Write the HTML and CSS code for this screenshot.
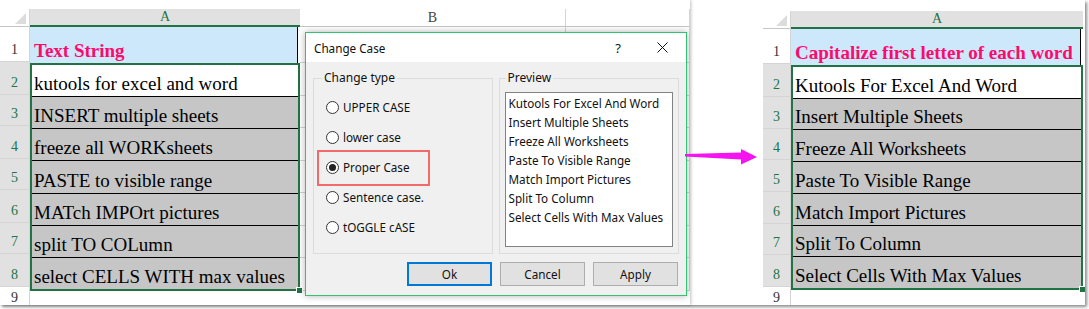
FILE: index.html
```html
<!DOCTYPE html>
<html>
<head lang="en">
    <meta charset="UTF-8">
    <title>Change Case</title>
    <link rel="stylesheet" href="styles.css">
</head>
<body>
<div class="page">
    <!-- before: original values + dialog -->
    <div class="shot shot-left">
        <div class="heads">
            <div class="corner"><span class="tri"></span></div>
            <div class="rh h36">1</div>
            <div class="rh on h33">2</div>
            <div class="rh on h32">3</div>
            <div class="rh on h33">4</div>
            <div class="rh on h32">5</div>
            <div class="rh on h33">6</div>
            <div class="rh on h32">7</div>
            <div class="rh on h33">8</div>
            <div class="rh last">9</div>
        </div>
        <div class="col col-a">
            <div class="ch on">A</div>
            <div class="cell cell-title">Text String</div>
            <div class="sel">
                <div class="cell cur">kutools for excel and word</div>
                <div class="cell">INSERT multiple sheets</div>
                <div class="cell">freeze all WORKsheets</div>
                <div class="cell">PASTE to visible range</div>
                <div class="cell">MATch IMPOrt pictures</div>
                <div class="cell">split TO COLumn</div>
                <div class="cell">select CELLS WITH max values</div>
                <span class="handle"></span>
            </div>
            <div class="cell blank"></div>
        </div>
        <div class="col col-b">
            <div class="ch">B</div>
            <div class="gc h36"></div>
            <div class="gc h33"></div>
            <div class="gc h32"></div>
            <div class="gc h33"></div>
            <div class="gc h32"></div>
            <div class="gc h33"></div>
            <div class="gc h32"></div>
            <div class="gc h33"></div>
        </div>
        <div class="col col-c">
            <div class="ch"></div>
            <div class="gc h36"></div>
            <div class="gc h33"></div>
            <div class="gc h32"></div>
            <div class="gc h33"></div>
            <div class="gc h32"></div>
            <div class="gc h33"></div>
            <div class="gc h32"></div>
            <div class="gc h33"></div>
        </div>

        <div class="dialog">
            <div class="dlg-title">
                <span class="dlg-name">Change Case</span>
                <span class="dlg-help">?</span>
                <svg class="dlg-close" width="11" height="11" viewBox="0 0 11 11">
                    <path d="M0.5 0.5 L10.5 10.5 M10.5 0.5 L0.5 10.5" stroke="#111" stroke-width="1" fill="none"/>
                </svg>
            </div>
            <div class="dlg-body">
                <div class="groups">
                    <fieldset class="grp grp-type">
                        <legend>Change type</legend>
                        <ul class="opts">
                            <li><span class="radio"></span>UPPER CASE</li>
                            <li><span class="radio"></span>lower case</li>
                            <li class="on"><span class="radio checked"></span>Proper Case</li>
                            <li><span class="radio"></span>Sentence case.</li>
                            <li><span class="radio"></span>tOGGLE cASE</li>
                        </ul>
                    </fieldset>
                    <fieldset class="grp grp-preview">
                        <legend>Preview</legend>
                        <ul class="preview">
                            <li>Kutools For Excel And Word</li>
                            <li>Insert Multiple Sheets</li>
                            <li>Freeze All Worksheets</li>
                            <li>Paste To Visible Range</li>
                            <li>Match Import Pictures</li>
                            <li>Split To Column</li>
                            <li>Select Cells With Max Values</li>
                        </ul>
                    </fieldset>
                </div>
                <div class="buttons">
                    <a class="btn btn-ok">Ok</a>
                    <a class="btn">Cancel</a>
                    <a class="btn">Apply</a>
                </div>
            </div>
        </div>
    </div>

    <div class="gap">
        <svg class="arrow" width="80" height="305" viewBox="0 0 80 305">
            <polygon points="0,154 56,152.5 56,149 72,157 56,164.5 56,159.5 0,156.5" fill="#f514f0"/>
        </svg>
    </div>

    <!-- after: proper case -->
    <div class="shot shot-right">
        <div class="heads">
            <div class="corner"><span class="tri"></span></div>
            <div class="rh h36">1</div>
            <div class="rh on h33">2</div>
            <div class="rh on h32">3</div>
            <div class="rh on h32">4</div>
            <div class="rh on h32">5</div>
            <div class="rh on h32">6</div>
            <div class="rh on h32">7</div>
            <div class="rh on h32">8</div>
            <div class="rh last">9</div>
        </div>
        <div class="col col-a">
            <div class="ch on">A</div>
            <div class="cell cell-title">Capitalize first letter of each word</div>
            <div class="sel">
                <div class="cell cur">Kutools For Excel And Word</div>
                <div class="cell">Insert Multiple Sheets</div>
                <div class="cell">Freeze All Worksheets</div>
                <div class="cell">Paste To Visible Range</div>
                <div class="cell">Match Import Pictures</div>
                <div class="cell">Split To Column</div>
                <div class="cell">Select Cells With Max Values</div>
                <span class="handle"></span>
            </div>
            <div class="cell blank"></div>
        </div>
    </div>
</div>
</body>
</html>
```

FILE: styles.css
```css
* {
    margin: 0;
    padding: 0;
    box-sizing: border-box;
}

body {
    width: 1089px;
    height: 309px;
    overflow: hidden;
    background: #fff;
    font-family: "Liberation Serif", "Times New Roman", serif;
}

.page {
    display: flex;
    width: 1085px;
    height: 305px;
    background: #fff;
    box-shadow: 2px 2px 3px rgba(0, 0, 0, .45);
}

.shot {
    display: flex;
    height: 100%;
    overflow: hidden;
    background: #fff;
}

.shot-left {
    position: relative;
    width: 690px;
    padding-top: 9px;
    box-shadow: 1px 0 3px rgba(0, 0, 0, .25);
}

.shot-right {
    width: 322px;
    padding-top: 11px;
}

.gap {
    width: 73px;
    height: 100%;
}

.arrow {
    display: block;
    margin-left: -5px;
    position: relative;
}

/* row headers */
.heads {
    width: 30px;
    display: flex;
    flex-direction: column;
}

.shot-right .heads {
    width: 28px;
}

.corner {
    height: 18px;
    display: flex;
    justify-content: flex-end;
    align-items: flex-end;
    padding: 0 3px 2px 0;
    border-right: 1px solid #d4d4d4;
    border-bottom: 1px solid #c6c6c6;
}

.tri {
    width: 0;
    height: 0;
    border-left: 11px solid transparent;
    border-bottom: 11px solid #dcdcdc;
}

.rh {
    display: flex;
    justify-content: center;
    align-items: flex-end;
    padding-bottom: 4px;
    font-size: 14px;
    line-height: 15px;
    color: #333;
    border-bottom: 1px solid #d4d4d4;
    border-right: 1px solid #d4d4d4;
}

.rh.on {
    background: #e1e1e1;
    color: #217346;
}

.rh.last {
    flex: 1;
    align-items: flex-start;
    padding: 3px 0 0;
    border-bottom: 0;
}

.h36 { height: 36px; }
.h33 { height: 33px; }
.h32 { height: 32px; }

/* columns */
.col {
    display: flex;
    flex-direction: column;
}

.col-a {
    width: 270px;
}

.shot-right .col-a {
    width: 292px;
}

.col-b {
    width: 266px;
}

.col-c {
    flex: 1;
}

.ch {
    height: 18px;
    flex: none;
    display: flex;
    justify-content: center;
    align-items: center;
    font-size: 14px;
    color: #444;
    border-bottom: 1px solid #c6c6c6;
    border-right: 1px solid #d4d4d4;
}

.ch.on {
    background: #e1e1e1;
    color: #217346;
    border-bottom: 2px solid #217346;
    border-right: 0;
}

.gc {
    flex: none;
    border-bottom: 1px solid #d4d4d4;
    border-right: 1px solid #d4d4d4;
}

.cell {
    display: flex;
    align-items: flex-end;
    padding: 0 0 1px 4px;
    font-size: 19px;
    line-height: 22px;
    color: #000;
    white-space: nowrap;
    overflow: hidden;
}

.cell-title {
    height: 36px;
    flex: none;
    margin-right: 2px;
    background: #cde8fb;
    color: #ff0a6c;
    font-weight: bold;
    border-right: 1px solid #000;
}

.sel {
    position: relative;
    height: 228px;
    flex: none;
    display: flex;
    flex-direction: column;
    border: 2px solid #217346;
}

.shot-right .sel {
    height: 225px;
}

.sel .cell {
    flex: 1;
    padding-left: 2px;
    background: #c6c6c6;
    border-bottom: 1px solid #000;
}

.sel .cell.cur {
    background: #fff;
}

.sel .cell:last-of-type {
    border-bottom: 0;
}

.handle {
    position: absolute;
    right: -5px;
    bottom: -5px;
    width: 7px;
    height: 7px;
    background: #217346;
    border: 1px solid #fff;
}

.blank {
    flex: 1;
}

/* dialog */
.dialog {
    position: absolute;
    left: 305px;
    top: 32px;
    width: 382px;
    height: 264px;
    border: 1px solid #33c173;
    background: #f0f0f0;
    box-shadow: 0 0 7px rgba(0, 0, 0, .3);
    font-family: "Noto Sans", "Open Sans", sans-serif;
    font-size: 11.7px;
    color: #111;
}

.dlg-title {
    height: 29px;
    display: flex;
    align-items: center;
    padding-left: 8px;
    background: #fff;
}

.dlg-help {
    margin-left: auto;
    font-size: 13px;
}

.dlg-close {
    margin: 0 18px 0 36px;
}

.dlg-body {
    padding: 8px 7px 0;
}

.groups {
    display: flex;
    gap: 6px;
}

.grp {
    height: 184px;
    border: 1px solid #dcdcdc;
}

.grp legend {
    padding: 0 2px;
    line-height: 16px;
    font-size: 12px;
}

.grp-type {
    width: 180px;
    padding: 6px 8px 0 12px;
}

.grp-type legend {
    margin-left: -4px;
}

.grp-preview {
    width: 181px;
    padding: 6px 5px 5px;
}

.grp-preview legend {
    margin-left: 1px;
}

.opts {
    list-style: none;
}

.opts li {
    position: relative;
    height: 30px;
    display: flex;
    align-items: center;
    gap: 4px;
}

.opts li.on::before {
    content: "";
    position: absolute;
    left: -9px;
    top: -2px;
    width: 109px;
    height: 32px;
    border: 2px solid #f26b6b;
}

.radio {
    width: 13px;
    height: 13px;
    border: 1px solid #333;
    border-radius: 50%;
    background: #fff;
    display: flex;
    justify-content: center;
    align-items: center;
}

.radio.checked::after {
    content: "";
    width: 7px;
    height: 7px;
    border-radius: 50%;
    background: #222;
}

.preview {
    list-style: none;
    height: 155px;
    padding: 1px 3px;
    background: #fff;
    border: 1px solid #828282;
}

.preview li {
    line-height: 19px;
    white-space: nowrap;
}

.buttons {
    display: flex;
    justify-content: flex-end;
    gap: 8px;
    margin-top: 8px;
    padding-right: 1px;
}

.btn {
    width: 85px;
    height: 24px;
    display: flex;
    justify-content: center;
    align-items: center;
    background: #e1e1e1;
    border: 1px solid #adadad;
}

.btn-ok {
    border: 2px solid #0078d7;
}
```
